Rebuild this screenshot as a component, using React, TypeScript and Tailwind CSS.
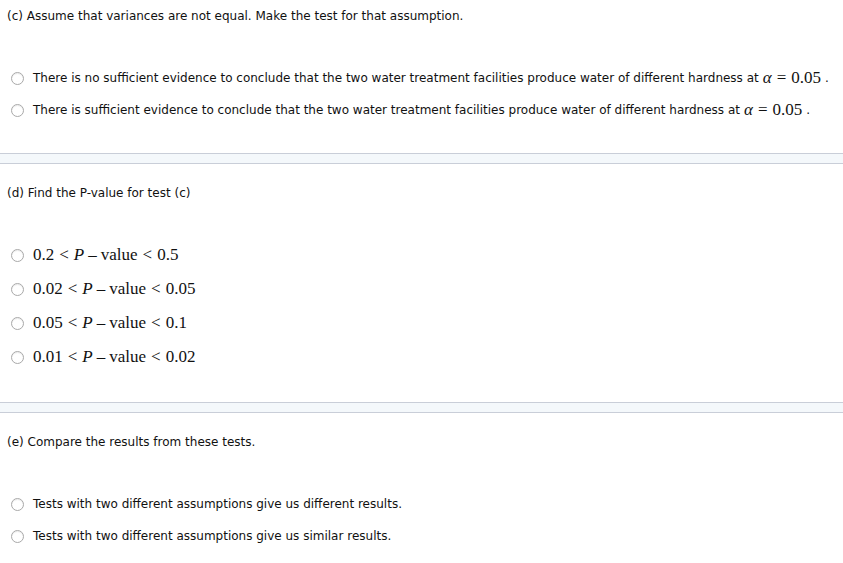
import React from "react";

const sans = { fontFamily: '"DejaVu Sans", Verdana, sans-serif' };
const serif = { fontFamily: '"Liberation Serif", "Times New Roman", serif' };

function Radio() {
  return (
    <span className="inline-block w-[13px] h-[13px] rounded-full border border-[#a9a9a9] bg-white shrink-0 shadow-[inset_0_1px_1px_rgba(0,0,0,0.08)]" />
  );
}

function Option({ children, h }: { children: React.ReactNode; h: string }) {
  return (
    <div className={`flex items-center pl-[11px] ${h}`}>
      <Radio />
      <div className="ml-[9px] flex items-center">{children}</div>
    </div>
  );
}

function Band() {
  return <div className="h-[11px] border-t border-b border-[#c9ced8] bg-[#f4f8fb]" />;
}

function Alpha() {
  return (
    <span style={serif} className="text-[17px] ml-[4px] flex items-center">
      <i>α</i>
      <span className="mx-[5px]">=</span>
      <span>0.05</span>
    </span>
  );
}

function PVal({ a, b }: { a: string; b: string }) {
  return (
    <span style={serif} className="text-[17px] text-[#111] flex items-center">
      <span>{a}</span>
      <span className="mx-[5px]">&lt;</span>
      <i>P</i>
      <span className="mx-[4px]">–</span>
      <span>value</span>
      <span className="mx-[5px]">&lt;</span>
      <span>{b}</span>
    </span>
  );
}

export default function App() {
  return (
    <div className="w-[843px] h-[563px] bg-white text-[#111] overflow-hidden" style={sans}>
      <div className="text-[12px] pl-[7px] pt-[7px] h-[62px]">
        (c) Assume that variances are not equal. Make the test for that assumption.
      </div>
      <div className="text-[12px]">
        <Option h="h-[32px]">
          <span>
            There is no sufficient evidence to conclude that the two water treatment facilities produce water of different hardness at
          </span>
          <Alpha />
          <span className="ml-[4px]">.</span>
        </Option>
        <Option h="h-[32px]">
          <span>
            There is sufficient evidence to conclude that the two water treatment facilities produce water of different hardness at
          </span>
          <Alpha />
          <span className="ml-[4px]">.</span>
        </Option>
      </div>
      <div className="h-[27px]" />
      <Band />
      <div className="text-[12px] pl-[7px] pt-[20px] h-[74px]">(d) Find the P-value for test (c)</div>
      <div>
        <Option h="h-[34px]"><PVal a="0.2" b="0.5" /></Option>
        <Option h="h-[34px]"><PVal a="0.02" b="0.05" /></Option>
        <Option h="h-[34px]"><PVal a="0.05" b="0.1" /></Option>
        <Option h="h-[34px]"><PVal a="0.01" b="0.02" /></Option>
      </div>
      <div className="h-[28px]" />
      <Band />
      <div className="text-[12px] pl-[7px] pt-[20px] h-[75px]">(e) Compare the results from these tests.</div>
      <div className="text-[12px]">
        <Option h="h-[32px]"><span>Tests with two different assumptions give us different results.</span></Option>
        <Option h="h-[32px]"><span>Tests with two different assumptions give us similar results.</span></Option>
      </div>
    </div>
  );
}
